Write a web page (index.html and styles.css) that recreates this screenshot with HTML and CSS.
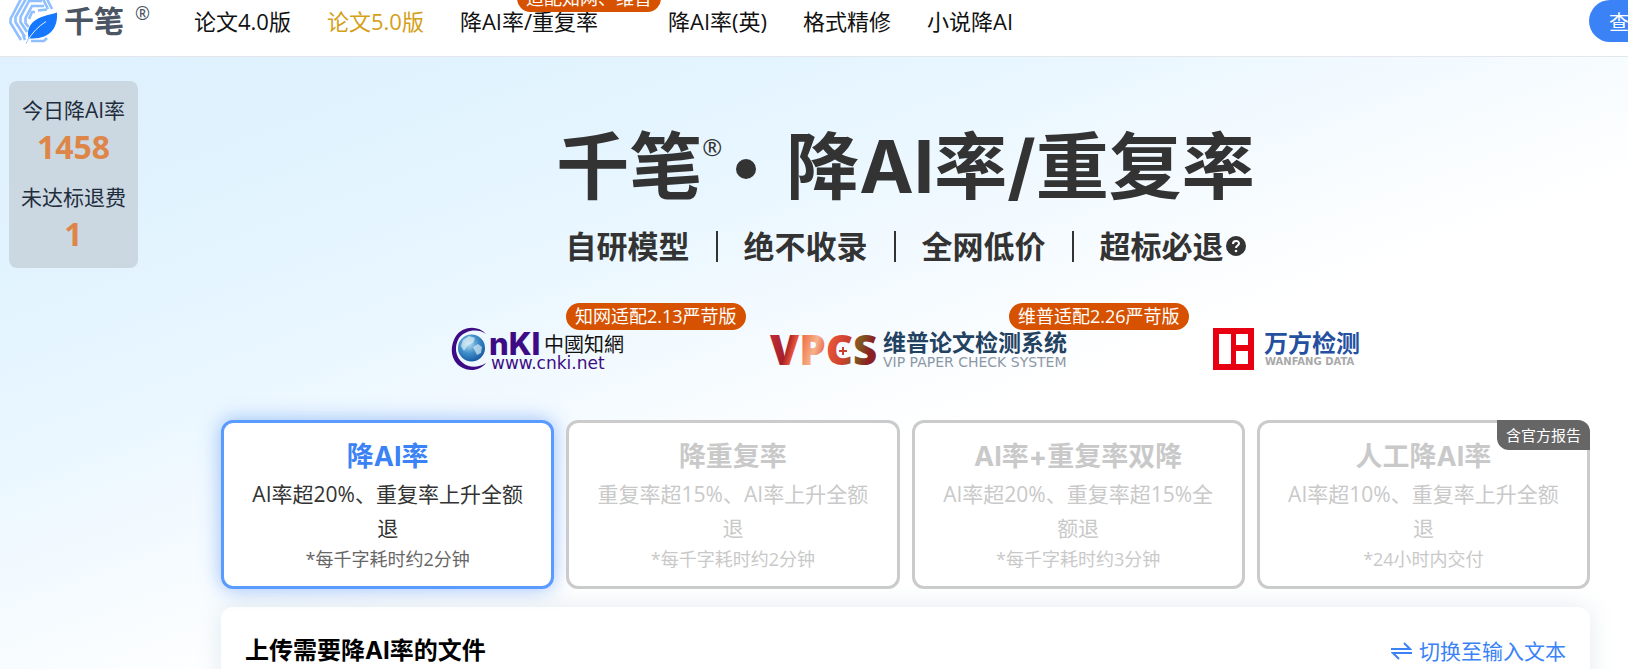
FILE: index.html
```html
<!DOCTYPE html>
<html lang="zh-CN">
  <head>
    <meta charset="UTF-8" />
    <meta name="viewport" content="width=device-width, initial-scale=1.0" />
    <title>千笔 - 降AI率/重复率</title>
    <link rel="stylesheet" href="styles.css">
  </head>
  <body>
    <header class="header">
      <a class="brand" href="#">
        <svg class="brand-icon" width="50" height="48" viewBox="8 -3 50 48">
          <g fill="none" stroke="#8fbfff" stroke-width="2.6">
            <path d="M22-3 10.500 19v4L21 40M27-3 15.500 17v5L25 37" />
            <path d="M42 1H29L20.500 17v5L27 32" />
            <path d="M44 6H32L25.500 18v5l3 4M35 12h-3l-3 7M38 10.500l9-1" />
            <path d="M46-3l6 12M42-3l6 12M24 0l7-4M31 41h13l3-3M23 35l2 5" />
          </g>
          <path d="M57 12.500C49 15 40 16 33 22c-5 5-5.500 10-4.500 15.500L25.500 44.500l4-6c9 0 16-1 21.500-6.500 5-5 6.500-12 6-19.500z" fill="#1677ff" />
          <path d="M27 41.500C32 33 38 26.500 46 21.500" fill="none" stroke="#fff" stroke-width="0.900" />
        </svg>
        <span class="brand-name">千笔</span>
        <span class="brand-mark">®</span>
      </a>
      <nav class="nav">
        <a href="#">论文4.0版</a>
        <a class="gold" href="#">论文5.0版</a>
        <a class="with-tip" href="#">降AI率/重复率<span class="tip nav-tip">适配知网、维普</span></a>
        <a href="#">降AI率(英)</a>
        <a href="#">格式精修</a>
        <a href="#">小说降AI</a>
      </nav>
      <button type="button" class="query-btn">查</button>
    </header>

    <aside class="stats">
      <div class="stats-label">今日降AI率</div>
      <div class="stats-num">1458</div>
      <div class="stats-label">未达标退费</div>
      <div class="stats-num">1</div>
    </aside>

    <main class="main">
      <h1 class="title">千笔<span class="reg">®</span><span class="dot"></span>降AI率/重复率</h1>

      <div class="slogan">
        <span>自研模型</span>
        <i></i>
        <span>绝不收录</span>
        <i></i>
        <span>全网低价</span>
        <i></i>
        <span class="slogan-last">超标必退<svg width="20" height="20" viewBox="0 0 20 20"><circle cx="10" cy="10" r="10" fill="#333" /><path d="M7 8c0-4 6-4 6-.500 0 2-3 2-3 4.500" fill="none" stroke="#fff" stroke-width="2" /><circle cx="10" cy="15" r="1.300" fill="#fff" /></svg></span>
      </div>

      <div class="logos">
        <div class="logo">
          <svg width="175" height="44" viewBox="0 0 175 44">
            <defs>
              <radialGradient id="globe" cx="40%" cy="35%" r="70%">
                <stop offset="0" stop-color="#b9def2" />
                <stop offset="0.500" stop-color="#3f8fca" />
                <stop offset="1" stop-color="#14559d" />
              </radialGradient>
            </defs>
            <path d="M35 7C27-2 12-1 5 9c-7 11-5 25 5 31 8 5 19 4 25-4-8 5-17 5-23 0-8-6-9-17-4-25C14 3 27 1 35 7z" fill="#3d0c85" />
            <circle cx="20.500" cy="21" r="13.500" fill="url(#globe)" />
            <path d="M12 13l6-4 6 2-2 5-5 2-4 6-3-5zM22 20l5-3 4 3-1 6-4 2-2-4z" fill="#e3f2f8" opacity="0.650" />
            <text class="cnki-name" x="38" y="28">nKI</text>
            <text class="cnki-cn" x="93" y="25">中國知網</text>
            <text class="cnki-url" x="40" y="42">www.cnki.net</text>
          </svg>
          <span class="tip logo-tip">知网适配2.13严苛版</span>
        </div>
        <div class="logo">
          <svg width="299" height="44" viewBox="0 0 299 44">
            <defs>
              <linearGradient id="vpcs" x1="0" x2="1" y1="0" y2="0.150">
                <stop offset="0" stop-color="#c5303a" />
                <stop offset="0.220" stop-color="#a51f2a" />
                <stop offset="0.300" stop-color="#ef5a35" />
                <stop offset="0.480" stop-color="#f5b48c" />
                <stop offset="0.600" stop-color="#e8553a" />
                <stop offset="0.780" stop-color="#c9402e" />
                <stop offset="0.880" stop-color="#7d5a20" />
                <stop offset="1" stop-color="#8c1f22" />
              </linearGradient>
            </defs>
            <text class="vpcs-name" x="0" y="38" fill="url(#vpcs)">VPCS</text>
            <path d="M69 24h8M73 20v8" stroke="#c9402e" stroke-width="2" />
            <text class="vpcs-cn" x="113" y="24">维普论文检测系统</text>
            <text class="vpcs-en" x="113" y="40">VIP PAPER CHECK SYSTEM</text>
          </svg>
          <span class="tip logo-tip">维普适配2.26严苛版</span>
        </div>
        <div class="logo">
          <svg width="148" height="44" viewBox="0 0 148 44">
            <path d="M0 1h41v42H0zM6 7v30h12V7zM23 7v11h12V7zM23 24v13h12V24z" fill="#e60012" fill-rule="evenodd" />
            <text class="wf-cn" x="51" y="25">万方检测</text>
            <text class="wf-en" x="52" y="38">WANFANG DATA</text>
          </svg>
        </div>
      </div>

      <div class="cards">
        <button type="button" class="card active">
          <span class="card-title">降AI率</span>
          <span class="card-desc">AI率超20%、重复率上升全额退</span>
          <span class="card-note">*每千字耗时约2分钟</span>
        </button>
        <button type="button" class="card">
          <span class="card-title">降重复率</span>
          <span class="card-desc">重复率超15%、AI率上升全额退</span>
          <span class="card-note">*每千字耗时约2分钟</span>
        </button>
        <button type="button" class="card">
          <span class="card-title">AI率+重复率双降</span>
          <span class="card-desc">AI率超20%、重复率超15%全额退</span>
          <span class="card-note">*每千字耗时约3分钟</span>
        </button>
        <button type="button" class="card">
          <span class="card-title">人工降AI率</span>
          <span class="card-desc">AI率超10%、重复率上升全额退</span>
          <span class="card-note">*24小时内交付</span>
          <span class="card-badge">含官方报告</span>
        </button>
      </div>

      <section class="upload">
        <h2>上传需要降AI率的文件</h2>
        <a class="switch" href="#">
          <svg width="21" height="20" viewBox="0 0 21 20" fill="none" stroke="#3b82f6" stroke-width="2">
            <path d="M0 8h19l-6-6M21 12H2l6 6" />
          </svg>
          切换至输入文本
        </a>
      </section>
    </main>
  </body>
</html>
```
FILE: styles.css
```css
* {
  box-sizing: border-box;
}
body {
  margin: 0;
  min-height: 100vh;
  overflow: hidden;
  font-family: "Open Sans", "Noto Sans CJK SC", sans-serif;
  background: linear-gradient(160deg, #dfefff 0%, #e1f3fe 20%, #e8f6ff 34%, #f3faff 46%, #ffffff 60%);
}
a {
  color: inherit;
  text-decoration: none;
}
button {
  font-family: inherit;
  cursor: pointer;
}

/* header */
.header {
  display: flex;
  align-items: flex-start;
  height: 57px;
  overflow: hidden;
  background: #fff;
  border-bottom: 1px solid #e5e7eb;
}
.brand {
  display: flex;
  width: 194px;
  flex: none;
  padding-left: 8px;
  color: #4b5563;
}
.brand-icon {
  display: block;
  margin-top: -3px;
}
.brand-name {
  margin-left: 6px;
  font-size: 30px;
  font-weight: bold;
  line-height: 42px;
}
.brand-mark {
  margin-left: 11px;
  font-size: 18px;
  line-height: 26px;
}
.nav {
  display: flex;
  gap: 36px;
  font-size: 22px;
  line-height: 42px;
  white-space: nowrap;
  color: #111;
}
.gold {
  color: #d4a017;
}
.with-tip {
  position: relative;
  padding-right: 34px;
}
.tip {
  position: absolute;
  height: 27px;
  padding: 0 9px;
  border-radius: 14px;
  background: #d65200;
  color: #fff;
  font-size: 18px;
  line-height: 27px;
  white-space: nowrap;
}
.nav-tip {
  top: -15px;
  left: 57px;
}
.query-btn {
  width: 120px;
  height: 42px;
  flex: none;
  margin-left: auto;
  margin-right: -81px;
  padding: 0 20px;
  border: none;
  border-radius: 21px;
  background: #3b82f6;
  color: #fff;
  font-size: 20px;
  text-align: left;
}

/* floating counter on the left */
.stats {
  position: absolute;
  top: 81px;
  left: 9px;
  padding: 12px 12px 14px;
  border-radius: 8px;
  background: #cbd8e2;
  text-align: center;
}
.stats-label {
  font-size: 21px;
  line-height: 34px;
  color: #1f2d3d;
}
.stats-num {
  margin-bottom: 13px;
  font-size: 32px;
  line-height: 40px;
  font-weight: bold;
  color: #de8548;
}
.stats-num:last-child {
  margin-bottom: 0;
}

/* main column */
.main {
  padding: 62px 38px 0 221px;
}
.title,
.card-title,
.upload h2 {
  font-family: Inter, "Noto Sans CJK SC", sans-serif;
}
.title {
  display: flex;
  justify-content: center;
  margin: 0;
  font-size: 73px;
  line-height: 96px;
  color: #333;
}
.reg {
  font-family: "Open Sans", sans-serif;
  font-size: 24px;
  font-weight: normal;
  line-height: 56px;
}
.dot {
  width: 20px;
  height: 20px;
  margin: 40px 30px 0 14px;
  border-radius: 50%;
  background: #333;
}
.slogan {
  display: flex;
  justify-content: center;
  align-items: center;
  gap: 26px;
  margin-top: 11px;
  font-size: 31px;
  line-height: 40px;
  font-weight: bold;
  color: #333;
}
.slogan i {
  width: 2px;
  height: 31px;
  background: #333;
}
.slogan-last {
  display: flex;
  align-items: center;
  gap: 2px;
}

/* detection system logos */
.logos {
  display: flex;
  justify-content: center;
  gap: 144px;
  margin-top: 61px;
}
.logo {
  position: relative;
}
.logo svg {
  display: block;
  overflow: visible;
}
.logo-tip {
  top: -24px;
  right: -120px;
}
.cnki-name {
  font: 800 31px Inter, sans-serif;
  fill: #3d0c85;
}
.cnki-cn {
  font: 20px "Noto Sans CJK SC", sans-serif;
  fill: #111;
}
.cnki-url {
  font: 17px "DejaVu Sans", sans-serif;
  fill: #3d0c85;
}
.vpcs-name {
  font: 800 42px "Open Sans", sans-serif;
}
.vpcs-cn {
  font: bold 23px "Noto Sans CJK SC", sans-serif;
  fill: #234261;
}
.vpcs-en {
  font: 14px "DejaVu Sans", sans-serif;
  fill: #8d98a5;
}
.wf-cn {
  font: bold 24px "Noto Sans CJK SC", sans-serif;
  fill: #24509f;
}
.wf-en {
  font: bold 10px "DejaVu Sans", sans-serif;
  fill: #a9a9a9;
}

/* mode cards */
.cards {
  display: grid;
  grid-template-columns: repeat(4, 1fr);
  gap: 12px;
  margin-top: 49px;
}
.card {
  position: relative;
  display: flex;
  flex-direction: column;
  align-items: center;
  padding: 14px 24px 13px;
  border: 3px solid #cbcbcb;
  border-radius: 12px;
  background: #fff;
  color: #c9c9c9;
  text-align: center;
}
.card-title {
  font-size: 27px;
  line-height: 40px;
  font-weight: bold;
}
.card-desc {
  font-size: 21px;
  line-height: 34px;
}
.card-note {
  font-size: 18px;
  line-height: 28px;
}
.card-badge {
  position: absolute;
  top: -3px;
  right: -3px;
  padding: 0 9px;
  border-radius: 0 12px 0 12px;
  background: #666;
  color: #fff;
  font-size: 15px;
  line-height: 30px;
}
.card.active {
  border-color: #5a9bff;
  box-shadow: 0 0 20px rgba(59, 130, 246, 0.5);
  color: #333;
}
.active .card-title {
  color: #3b82f6;
}
.active .card-note {
  color: #666;
}

.upload {
  display: flex;
  justify-content: space-between;
  align-items: center;
  margin-top: 18px;
  padding: 24px;
  border-radius: 12px;
  background: #fff;
  box-shadow: 0 0 24px rgba(70, 120, 150, 0.15);
}
.upload h2 {
  margin: 0;
  font-size: 24px;
  line-height: 40px;
  color: #000;
}
.switch {
  display: flex;
  align-items: center;
  gap: 7px;
  font-size: 21px;
  line-height: 40px;
  color: #3b82f6;
}
```
